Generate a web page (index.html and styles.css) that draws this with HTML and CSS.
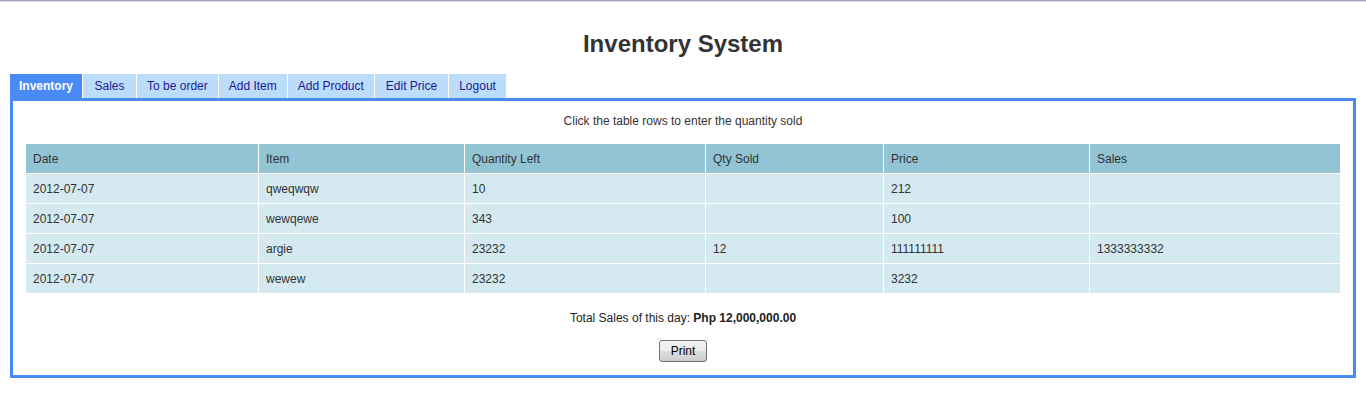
FILE: index.html
```html
<!DOCTYPE html>
<html>
<head>
<meta charset="utf-8">
<title>Inventory System</title>
<link rel="stylesheet" href="styles.css">
</head>
<body>
<div class="topline"></div>
<h1 class="title">Inventory System</h1>
<nav class="tabs">
  <a class="tab active">Inventory</a>
  <a class="tab tab-roomy">Sales</a>
  <a class="tab">To be order</a>
  <a class="tab">Add Item</a>
  <a class="tab">Add Product</a>
  <a class="tab tab-wide">Edit Price</a>
  <a class="tab">Logout</a>
</nav>
<section class="panel">
  <p class="hint">Click the table rows to enter the quantity sold</p>
  <table class="grid">
    <thead>
      <tr>
        <th class="c1">Date</th>
        <th class="c2">Item</th>
        <th class="c3">Quantity Left</th>
        <th class="c4">Qty Sold</th>
        <th class="c5">Price</th>
        <th class="c6">Sales</th>
      </tr>
    </thead>
    <tbody>
      <tr><td>2012-07-07</td><td>qweqwqw</td><td>10</td><td></td><td>212</td><td></td></tr>
      <tr><td>2012-07-07</td><td>wewqewe</td><td>343</td><td></td><td>100</td><td></td></tr>
      <tr><td>2012-07-07</td><td>argie</td><td>23232</td><td>12</td><td>111111111</td><td>1333333332</td></tr>
      <tr class="last"><td>2012-07-07</td><td>wewew</td><td>23232</td><td></td><td>3232</td><td></td></tr>
    </tbody>
  </table>
  <p class="total">Total Sales of this day: <b>Php 12,000,000.00</b></p>
  <div class="actions"><button class="btn" type="button">Print</button></div>
</section>
</body>
</html>
```

FILE: styles.css
```css
html, body {
  margin: 0;
  padding: 0;
  background: #ffffff;
  font-family: "Liberation Sans", Arial, sans-serif;
  font-size: 12px;
  color: #333333;
}

.topline {
  height: 1px;
  background: #9ea6b8;
  border-bottom: 1px solid #d6dae2;
}

.title {
  margin: 28px 0 0 0;
  font-size: 24px;
  line-height: 28px;
  font-weight: bold;
  text-align: center;
  color: #333333;
}

.tabs {
  display: flex;
  gap: 1px;
  margin: 16px 0 0 10px;
  height: 24px;
}

.tab {
  display: block;
  height: 24px;
  line-height: 24px;
  padding: 0 10px;
  background: #bbdcfb;
  color: #1f1a8f;
  font-size: 12px;
  text-decoration: none;
  white-space: nowrap;
}

.tab.tab-roomy {
  padding: 0 11.5px;
}

.tab.tab-wide {
  padding: 0 11px;
}

.tab.active {
  background: #4a8af4;
  color: #ffffff;
  font-weight: bold;
  padding: 0 9px;
}

.panel {
  margin: 0 10px;
  border: 3px solid #4a8af4;
  padding: 13px 13px 13px 13px;
}

.hint {
  margin: 0;
  line-height: 14px;
  text-align: center;
  color: #333333;
}

.grid {
  margin-top: 16px;
  width: 1314px;
  table-layout: fixed;
  border-collapse: separate;
  border-spacing: 0;
}

.grid th,
.grid td {
  box-sizing: border-box;
  height: 30px;
  padding: 0 7px;
  text-align: left;
  font-weight: normal;
  color: #333333;
  border-right: 1px solid #ffffff;
  border-bottom: 1px solid #ffffff;
  vertical-align: middle;
  white-space: nowrap;
}

.grid th:last-child,
.grid td:last-child {
  border-right: 0;
}

.grid th {
  background: #92c4d3;
}

.grid td {
  background: #d4e9f0;
}

.grid tr.last td {
  border-bottom: 0;
  height: 29px;
}

.c1 { width: 233px; }
.c2 { width: 206px; }
.c3 { width: 241px; }
.c4 { width: 178px; }
.c5 { width: 206px; }
.c6 { width: 250px; }

.total {
  margin: 18px 0 0 0;
  line-height: 14px;
  text-align: center;
  color: #222222;
}

.total b {
  color: #222222;
}

.actions {
  display: flex;
  justify-content: center;
  margin-top: 15px;
}

.btn {
  width: 48px;
  height: 22px;
  padding: 0;
  font-family: "Liberation Sans", Arial, sans-serif;
  font-size: 12px;
  color: #000000;
  border: 1px solid #707070;
  border-radius: 3px;
  background: linear-gradient(#f2f2f2, #ebebeb 50%, #dddddd 50%, #cfcfcf);
}
```
